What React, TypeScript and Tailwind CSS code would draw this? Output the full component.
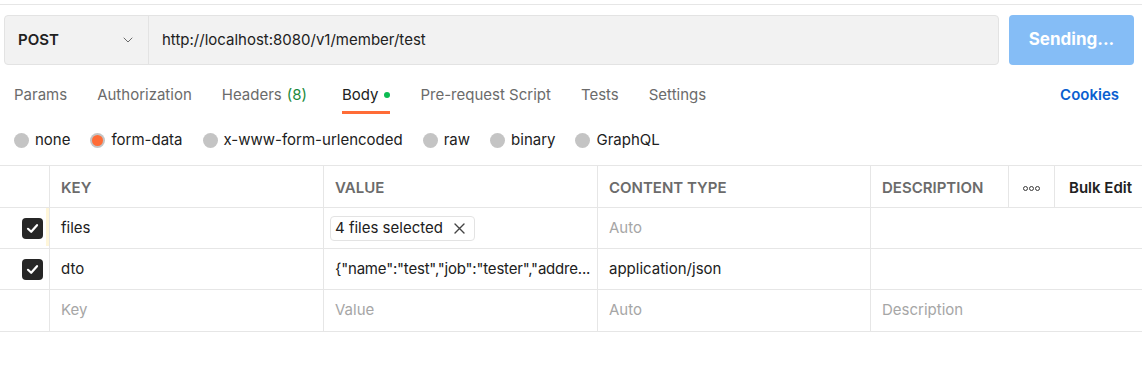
import {ChevronDown} from "lucide-react";

const tabs = [
  {label: "Params"},
  {label: "Authorization"},
  {label: "Headers", count: "(8)"},
  {label: "Body", active: true},
  {label: "Pre-request Script"},
  {label: "Tests"},
  {label: "Settings"}
];

const bodyTypes = ["none", "form-data", "x-www-form-urlencoded", "raw", "binary", "GraphQL"];

const Check = () => (
  <div className="w-[21px] h-[21px] rounded-[4px] bg-[#262626] flex items-center justify-center">
    <svg width="13" height="13" viewBox="0 0 13 13" fill="none">
      <path d="M2 6.8 L5.2 9.8 L11 3.2" stroke="white" strokeWidth="2.2" strokeLinecap="round" strokeLinejoin="round"/>
    </svg>
  </div>
);

const Radio = ({on}: {on: boolean}) => (
  on ? (
    <span className="w-[15px] h-[15px] rounded-full bg-[#c4c4c4] flex items-center justify-center">
      <span className="w-[11px] h-[11px] rounded-full bg-[#ff6c37]"/>
    </span>
  ) : (
    <span className="w-[15px] h-[15px] rounded-full bg-[#c4c4c4]"/>
  )
);

const col = "border-r border-[#e6e6e6] flex items-center";

export default function App() {
  return (
    <div className="w-[1142px] h-[375px] bg-white font-['Inter',sans-serif] text-[#212121] text-[15px] overflow-hidden">
      <div className="h-[5px] border-b border-[#e6e6e6]"/>
      {/* request bar */}
      <div className="flex pl-[4px] pr-[8px] mt-[10px] gap-[10px]">
        <div className="flex flex-1 h-[50px] rounded-[4px] border border-[#e3e3e3] bg-[#f2f2f2]">
          <div className="w-[144px] flex items-center justify-between pl-[13px] pr-[12px] border-r border-[#e3e3e3]">
            <span className="font-semibold text-[15px] text-[#212121]">POST</span>
            <ChevronDown size={16} strokeWidth={1.5} className="text-[#6b6b6b]"/>
          </div>
          <div className="flex items-center pl-[13px]">http://localhost:8080/v1/member/test</div>
        </div>
        <button className="w-[125px] h-[50px] rounded-[4px] bg-[#85bdf6] text-white font-bold text-[17px]">Sending...</button>
      </div>
      {/* tabs */}
      <div className="flex items-stretch h-[50px] pt-[10px] pl-[14px] pr-[23px]">
        <div className="flex gap-[30px] flex-1">
          {tabs.map(t => (
            <div key={t.label} className={`flex items-center relative ${t.active ? "text-[#212121]" : "text-[#6b6b6b]"} ${t.count ? "mr-[5px]" : ""}`}>
              <span>{t.label}</span>
              {t.count && <span className="ml-[5px] text-[#1b8a3c]">{t.count}</span>}
              {t.active && <span className="ml-[6px] w-[6px] h-[6px] rounded-full bg-[#0cbb52]"/>}
              {t.active && <span className="absolute left-0 right-0 bottom-[1px] h-[3px] bg-[#ff6c37]"/>}
            </div>
          ))}
        </div>
        <div className="flex items-center text-[#0b5fd0] font-semibold">Cookies</div>
      </div>
      {/* body types */}
      <div className="flex items-center gap-[20px] pl-[14px] h-[50px] pt-[1px]">
        {bodyTypes.map(b => (
          <div key={b} className="flex items-center gap-[6px]">
            <Radio on={b === "form-data"}/>
            <span className="text-[#212121]">{b}</span>
          </div>
        ))}
      </div>
      {/* table */}
      <div className="border-t border-b border-[#e6e6e6]">
        <div className="flex h-[42px] border-b border-[#e6e6e6] text-[#6b6b6b] font-semibold">
          <div className="w-[50px] border-r border-[#e6e6e6]"/>
          <div className={`${col} pt-[3px] w-[274px] pl-[11px]`}>KEY</div>
          <div className={`${col} pt-[3px] w-[274px] pl-[11px]`}>VALUE</div>
          <div className={`${col} pt-[3px] w-[273px] pl-[11px]`}>CONTENT TYPE</div>
          <div className={`${col} pt-[3px] w-[138px] pl-[11px]`}>DESCRIPTION</div>
          <div className="w-[46px] pt-[3px] border-r border-[#e6e6e6] flex items-center justify-center gap-[1px]">
            <span className="w-[5px] h-[5px] rounded-full border border-[#3a3a3a]"/>
            <span className="w-[5px] h-[5px] rounded-full border border-[#3a3a3a]"/>
            <span className="w-[5px] h-[5px] rounded-full border border-[#3a3a3a]"/>
          </div>
          <div className="flex-1 flex items-center pt-[3px] pl-[14px] text-[#212121]">Bulk Edit</div>
        </div>
        <div className="flex h-[41px] border-b border-[#e6e6e6]">
          <div className="w-[50px] border-r border-[#e6e6e6] flex items-center pl-[22px] relative">
            <Check/>
            <span className="absolute right-0 top-0 bottom-[2px] w-[3px] bg-[#fff6d9]"/>
          </div>
          <div className={`${col} w-[274px] pl-[11px]`}>files</div>
          <div className={`${col} w-[274px] pl-[6px]`}>
            <div className="flex items-center gap-[11px] h-[25px] pl-[4px] pr-[9px] border border-[#e3e3e3] rounded-[4px]">
              <span>4 files selected</span>
              <svg width="11" height="11" viewBox="0 0 11 11" fill="none">
                <path d="M1 1 L10 10 M10 1 L1 10" stroke="#444" strokeWidth="1.4" strokeLinecap="round"/>
              </svg>
            </div>
          </div>
          <div className={`${col} w-[273px] pl-[11px] text-[#a6a6a6]`}>Auto</div>
          <div className="flex-1"/>
        </div>
        <div className="flex h-[41px] border-b border-[#e6e6e6]">
          <div className="w-[50px] border-r border-[#e6e6e6] flex items-center pl-[22px]">
            <Check/>
          </div>
          <div className={`${col} w-[274px] pl-[11px]`}>dto</div>
          <div className={`${col} w-[274px] pl-[11px] pr-[2px] whitespace-nowrap tracking-[-0.2px]`}>
            {'{"name":"test","job":"tester","addre...'}
          </div>
          <div className={`${col} w-[273px] pl-[11px]`}>application/json</div>
          <div className="flex-1"/>
        </div>
        <div className="flex h-[41px] text-[#a6a6a6]">
          <div className="w-[50px] border-r border-[#e6e6e6]"/>
          <div className={`${col} w-[274px] pl-[11px]`}>Key</div>
          <div className={`${col} w-[274px] pl-[11px]`}>Value</div>
          <div className={`${col} w-[273px] pl-[11px]`}>Auto</div>
          <div className="flex-1 flex items-center pl-[11px]">Description</div>
        </div>
      </div>
    </div>
  );
}
